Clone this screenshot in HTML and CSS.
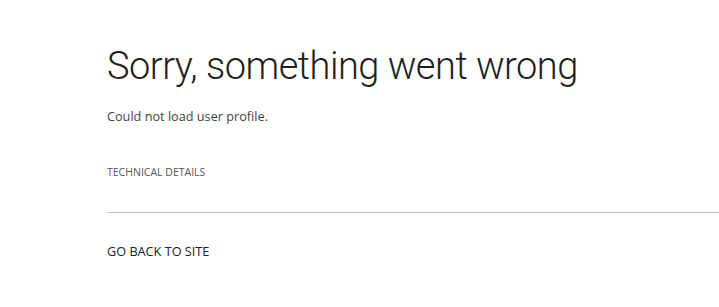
FILE: index.html
```html
<html>
<head>
<title>Error</title>
  <link rel="stylesheet" href="styles.css">
</head>
<body>
<div class="error-page">
  <h1 class="title">Sorry, something went wrong</h1>
  <div class="message">Could not load user profile.</div>
  <div class="details">TECHNICAL DETAILS</div>
  <div class="rule"></div>
  <a class="back" href="#">GO BACK TO SITE</a>
</div>
</body>
</html>
```

FILE: styles.css
```css
body{
  margin: 0;
  background: #fff;
  font-family: "Open Sans", sans-serif;
  color: #444;
}

.error-page{
  padding: 40px 0 0 107px;
  display: flex;
  flex-direction: column;
  align-items: flex-start;
}

.title{
  font-family: Roboto, "Open Sans", sans-serif;
  font-size: 38px;
  font-weight: 300;
  letter-spacing: -0.5px;
  color: #1f1f1f;
  margin: 0;
  line-height: 52px;
}

.message{
  font-size: 12.7px;
  color: #444;
  margin-top: 15px;
}

.details{
  font-size: 10.5px;
  color: #555;
  margin-top: 40px;
}

.rule{
  align-self: stretch;
  border-top: 1px solid #c6c6c6;
  margin-top: 33px;
}

.back{
  font-size: 12.7px;
  color: #222;
  text-decoration: none;
  margin-top: 29px;
}
```
